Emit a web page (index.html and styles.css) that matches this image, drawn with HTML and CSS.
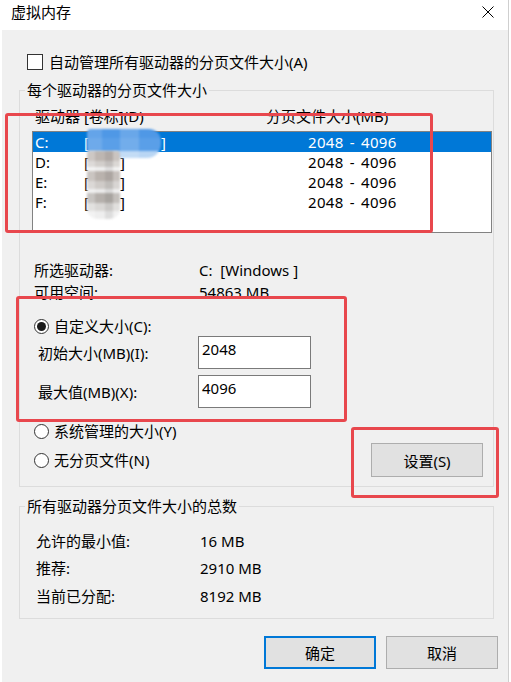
FILE: index.html
```
<!DOCTYPE html>
<html lang="zh-CN">
<head>
<meta charset="utf-8">
<title>虚拟内存</title>
<link rel="stylesheet" href="styles.css">
</head>
<body>
<div class="window">
  <div class="titlebar">
    <span class="title">虚拟内存</span>
    <svg class="close" width="12" height="12" viewBox="0 0 12 12"><path d="M0.5 0.5 L11.5 11.5 M11.5 0.5 L0.5 11.5" stroke="#000" stroke-width="1" fill="none"/></svg>
  </div>

  <div class="auto-row">
    <span class="checkbox"></span>
    <span>自动管理所有驱动器的分页文件大小(A)</span>
  </div>

  <fieldset class="group group1">
    <legend>每个驱动器的分页文件大小</legend>
    <div class="col-head"><span class="ch1">驱动器 [卷标](D)</span><span>分页文件大小(MB)</span></div>
    <div class="listbox">
      <div class="lrow sel"><span class="drv">C:</span><span class="lbl">[<span class="gap-long"></span>]</span><span class="size">2048 - 4096</span></div>
      <div class="lrow"><span class="drv">D:</span><span class="lbl">[<span class="gap-short"></span>]</span><span class="size">2048 - 4096</span></div>
      <div class="lrow"><span class="drv">E:</span><span class="lbl">[<span class="gap-short"></span>]</span><span class="size">2048 - 4096</span></div>
      <div class="lrow"><span class="drv">F:</span><span class="lbl">[<span class="gap-short"></span>]</span><span class="size">2048 - 4096</span></div>
      <div class="blur blur-c"></div>
      <div class="blur blur-g"></div>
    </div>

    <div class="info info1"><span class="k">所选驱动器:</span><span>C:&nbsp;&nbsp;[Windows ]</span></div>
    <div class="info info2"><span class="k">可用空间:</span><span>54863 MB</span></div>

    <div class="radio-row custom"><span class="radio on"></span><span>自定义大小(C):</span></div>
    <div class="field"><span class="k">初始大小(MB)(I):</span><span class="tb">2048</span></div>
    <div class="field field2"><span class="k">最大值(MB)(X):</span><span class="tb">4096</span></div>

    <div class="bottom">
      <div class="radios">
        <div class="radio-row"><span class="radio"></span><span>系统管理的大小(Y)</span></div>
        <div class="radio-row"><span class="radio"></span><span>无分页文件(N)</span></div>
      </div>
      <div class="btn btn-set">设置(S)</div>
    </div>
  </fieldset>

  <fieldset class="group group2">
    <legend>所有驱动器分页文件大小的总数</legend>
    <div class="sum s1"><span class="k">允许的最小值:</span><span>16 MB</span></div>
    <div class="sum s2"><span class="k">推荐:</span><span>2910 MB</span></div>
    <div class="sum s3"><span class="k">当前已分配:</span><span>8192 MB</span></div>
  </fieldset>

  <div class="actions">
    <div class="btn btn-ok">确定</div>
    <div class="btn">取消</div>
  </div>

  <div class="mark mark1"></div>
  <div class="mark mark2"></div>
  <div class="mark mark3"></div>
</div>
</body>
</html>
```
FILE: styles.css
```
* { box-sizing: border-box; }
body {
  margin: 0;
  background: #fff;
  font-family: "Noto Sans", "Noto Sans CJK SC", sans-serif;
  font-size: 15px;
  color: #000;
}
.window {
  position: relative;
  margin-left: 2px;
  width: 507px;
  height: 682px;
  background: #f0f0f0;
  border-right: 1px solid #cfcfcf;
  overflow: hidden;
}
.titlebar {
  height: 30px;
  background: #fff;
  display: flex;
  align-items: center;
  justify-content: space-between;
  padding: 0 14px 6px 9px;
  line-height: 20px;
}
.close { margin-bottom: 1px; }

.auto-row {
  display: flex;
  align-items: center;
  gap: 6px;
  height: 20px;
  line-height: 20px;
  margin: 22px 0 0 25px;
}
.checkbox {
  width: 16px;
  height: 16px;
  border: 1px solid #333;
  background: #fff;
}

.group {
  margin: 8px 0 0 17px;
  width: 475px;
  border: 1px solid #dcdcdc;
  padding: 0;
  min-inline-size: auto;
}
.group legend {
  margin-left: 5px;
  padding: 0 2px;
  line-height: 20px;
}
.group1 { padding-bottom: 8px; }
.group2 { margin-top: 9px; padding-bottom: 12px; }

.col-head {
  display: flex;
  height: 20px;
  line-height: 20px;
  margin-top: 6px;
  padding-left: 15px;
  white-space: nowrap;
}
.ch1 { width: 231px; }

.listbox {
  position: relative;
  margin: 5px 0 0 12px;
  width: 460px;
  height: 102px;
  background: #fff;
  border: 1px solid #828282;
}
.lrow {
  display: flex;
  height: 20px;
  line-height: 20px;
  padding-left: 2px;
  white-space: nowrap;
}
.lrow.sel { background: #0078d7; color: #fff; }
.drv { width: 49px; }
.lbl { width: 224px; display: flex; }
.size { word-spacing: 2px; letter-spacing: 0.3px; }
.gap-long { display: inline-block; width: 72px; }
.gap-short { display: inline-block; width: 31px; }

.blur { position: absolute; }
.blur-c {
  left: 54px;
  top: -3px;
  width: 74px;
  height: 29px;
  border-radius: 4px 12px 14px 10px;
  background:
    linear-gradient(to right, rgba(255,255,255,0.12) 0 20%, transparent 20% 45%, rgba(255,255,255,0.15) 45% 70%, transparent 70%),
    linear-gradient(to bottom, #4f98e6 0 30%, #5a9fe8 30% 75%, #b9d6f4 75%);
  filter: blur(1.2px);
}
.blur-g {
  left: 54px;
  top: 19px;
  width: 33px;
  height: 68px;
  border-radius: 3px 3px 10px 10px;
  background:
    linear-gradient(to right, rgba(255,255,255,0.25) 0 25%, transparent 25% 55%, rgba(0,0,0,0.07) 55% 80%, rgba(255,255,255,0.2) 80%),
    linear-gradient(to bottom, #bdb6b1 0 14%, #d2cecb 14% 24%, #f0f0f0 24% 30%, #b9b2ad 30% 44%, #cfcbc8 44% 56%, #ececec 56% 62%, #b5b0ac 62% 76%, #d9d7d5 76% 88%, #eeeeee 88%);
  filter: blur(1px);
}

.info {
  display: flex;
  height: 20px;
  line-height: 20px;
  padding-left: 14px;
  white-space: nowrap;
}
.info .k { width: 165px; }
.info1 { margin-top: 27px; }
.info2 { margin-top: 2px; }

.radio-row {
  display: flex;
  align-items: center;
  gap: 5px;
  height: 20px;
  line-height: 20px;
  white-space: nowrap;
}
.custom { margin-top: 14px; padding-left: 14px; }
.radio {
  width: 15px;
  height: 15px;
  border: 1px solid #333;
  border-radius: 50%;
  background: #fff;
  display: flex;
  align-items: center;
  justify-content: center;
}
.radio.on::after {
  content: "";
  width: 9px;
  height: 9px;
  border-radius: 50%;
  background: #1a1a1a;
}

.field {
  display: flex;
  align-items: center;
  height: 33px;
  padding-left: 18px;
  white-space: nowrap;
}
.field .k { width: 160px; }
.field2 { margin-top: 6px; }
.tb {
  width: 113px;
  height: 33px;
  background: #fff;
  border: 1px solid #7a7a7a;
  padding: 2px 3px;
  line-height: 20px;
}

.bottom { display: flex; margin-top: 13px; }
.radios {
  display: flex;
  flex-direction: column;
  gap: 9px;
  padding-left: 14px;
}

.btn {
  width: 112px;
  height: 33px;
  background: #e1e1e1;
  border: 1px solid #adadad;
  display: flex;
  align-items: center;
  justify-content: center;
  white-space: nowrap;
}
.btn-set {
  margin: 22px 10px 0 auto;
  height: 34px;
}
.group1 { padding-bottom: 9px; }
.btn-ok { border: 2px solid #0078d7; }

.sum {
  display: flex;
  height: 20px;
  line-height: 20px;
  padding-left: 16px;
  white-space: nowrap;
}
.sum .k { width: 164px; }
.s1 { margin-top: 15px; }
.s2 { margin-top: 7px; }
.s3 { margin-top: 8px; }

.actions {
  display: flex;
  gap: 10px;
  margin: 17px 0 0 262px;
}

.mark {
  position: absolute;
  border: 3px solid #e8474d;
  border-radius: 3px;
}
.mark1 { left: 3px; top: 113px; width: 428px; height: 120px; }
.mark2 { left: 14px; top: 296px; width: 331px; height: 126px; }
.mark3 { left: 349px; top: 427px; width: 148px; height: 71px; }
```
